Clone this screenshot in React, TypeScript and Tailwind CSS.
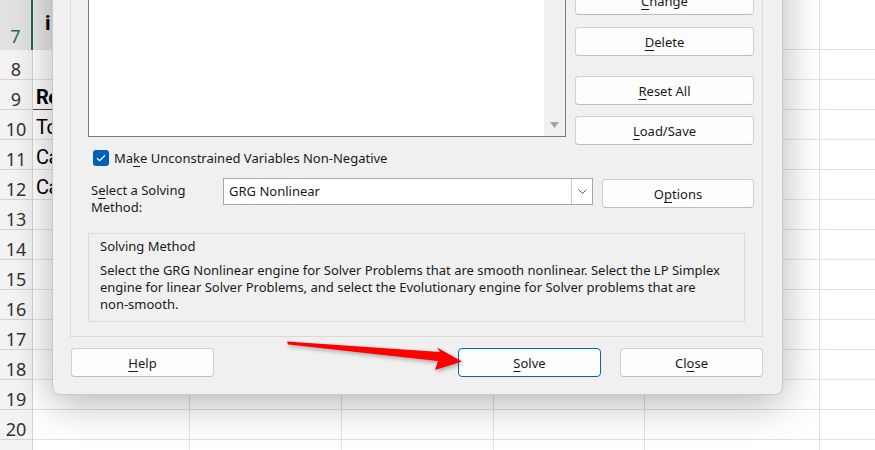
import React from "react";

const rows = [
  { n: "7", h: "h-[50px]", text: "i", bold: true, selected: true },
  { n: "8", h: "h-[30px]", text: "" },
  { n: "9", h: "h-[30px]", text: "Re", bold: true, underline: true },
  { n: "10", h: "h-[30px]", text: "To" },
  { n: "11", h: "h-[30px]", text: "Ca" },
  { n: "12", h: "h-[30px]", text: "Ca" },
  { n: "13", h: "h-[30px]", text: "" },
  { n: "14", h: "h-[30px]", text: "" },
  { n: "15", h: "h-[30px]", text: "" },
  { n: "16", h: "h-[30px]", text: "" },
  { n: "17", h: "h-[30px]", text: "" },
  { n: "18", h: "h-[30px]", text: "" },
  { n: "19", h: "h-[30px]", text: "" },
  { n: "20", h: "h-[30px]", text: "" },
  { n: "", h: "h-[30px]", text: "" }
];

function Sheet() {
  return (
    <div className="flex flex-col font-['Roboto',sans-serif]">
      {rows.map((r, i) => (
        <div key={i} className={`flex shrink-0 ${r.h}`}>
          <div
            className={
              r.selected
                ? "w-[33px] shrink-0 bg-[#e1e1e1] border-r-2 border-[#1e7145] flex items-end justify-center text-[18px] font-['Noto_Sans',sans-serif] text-[#1e7145]"
                : "w-[33px] shrink-0 bg-[#f3f3f3] border-r border-b border-[#d4d4d4] flex items-center justify-center pt-[9px] text-[18px] font-['Noto_Sans',sans-serif] text-[#333]"
            }
          >
            {r.n}
          </div>
          <div
            className={
              r.selected
                ? "w-[157px] shrink-0 bg-[#e8e8e8] border-r border-b border-[#e1e1e1] pl-[12px] pt-[8px] text-[21px] font-bold text-black"
                : r.underline
                ? "w-[157px] shrink-0 border-r border-b border-b-[#444] border-r-[#e1e1e1] pl-[3px] pt-[2px] text-[20px] font-bold tracking-[-0.5px] text-black"
                : "w-[157px] shrink-0 border-r border-b border-[#e1e1e1] pl-[3px] pt-[2px] text-[20px] tracking-[-0.5px] text-black"
            }
          >
            {r.text}
          </div>
          <div className="w-[152px] shrink-0 border-r border-b border-[#e1e1e1]" />
          <div className="w-[152px] shrink-0 border-r border-b border-[#e1e1e1]" />
          <div className="w-[151px] shrink-0 border-r border-b border-[#e1e1e1]" />
          <div className="w-[175px] shrink-0 border-r border-b border-[#e1e1e1]" />
          <div className="flex-1 border-b border-[#e1e1e1]" />
        </div>
      ))}
    </div>
  );
}

function Btn({
  children,
  className = "",
  primary = false
}: {
  children: React.ReactNode;
  className?: string;
  primary?: boolean;
}) {
  return (
    <div
      className={
        "h-[29px] shrink-0 flex items-center justify-center pt-[2px] rounded-[4px] bg-[#fdfdfd] text-[13px] text-[#1a1a1a] " +
        (primary
          ? "border border-[#0067c0]"
          : "border border-[#d0d0d0] border-b-[#bdbdbd]") +
        " " +
        className
      }
    >
      {children}
    </div>
  );
}

function U({ children }: { children: React.ReactNode }) {
  return <span className="underline underline-offset-[3px]">{children}</span>;
}

function Dialog() {
  return (
    <div className="absolute left-[52px] top-[-60px] w-[731px] h-[455px] bg-[#f0f0f0] rounded-b-[8px] border border-[#c9c9c9] shadow-[0_8px_40px_rgba(0,0,0,0.3)] flex flex-col pl-[17px] pr-[19px] font-['Noto_Sans',sans-serif] text-[13px] text-[#1a1a1a]">
      <div className="border border-t-0 border-[#dadada] flex flex-col pb-[14px]">
        <div className="flex items-start pl-[17px]">
          <div className="mt-[19px] w-[478px] h-[177px] bg-white border border-[#7a7a7a] flex justify-end">
            <div className="w-[21px] h-full bg-[#f0f0f0] flex flex-col justify-end items-center pb-[8px]">
              <svg width="9" height="6" viewBox="0 0 9 6">
                <polygon points="0,0 9,0 4.5,6" fill="#a3a3a3" />
              </svg>
            </div>
          </div>
          <div className="ml-[9px] mt-[45px] w-[179px] flex flex-col">
            <Btn>
              <U>C</U>hange
            </Btn>
            <Btn className="mt-[12px]">
              <U>D</U>elete
            </Btn>
            <Btn className="mt-[20px]">
              <U>R</U>eset All
            </Btn>
            <Btn className="mt-[11px]">
              <U>L</U>oad/Save
            </Btn>
          </div>
        </div>

        <div className="mt-[5px] flex items-center pl-[22px] h-[16px]">
          <div className="w-[16px] h-[16px] rounded-[3px] bg-[#005fb8] flex items-center justify-center">
            <svg width="10" height="8" viewBox="0 0 10 8">
              <path d="M1 4.2 L3.7 6.7 L9 1.3" stroke="white" strokeWidth="1.3" fill="none" />
            </svg>
          </div>
          <span className="ml-[5px] leading-[16px]">
            Ma<U>k</U>e Unconstrained Variables Non-Negative
          </span>
        </div>

        <div className="mt-[12px] h-[40px] flex items-start">
          <div className="w-[152px] shrink-0 pl-[20px] pt-[4px] leading-[17px]">
            S<U>e</U>lect a Solving
            <br />
            Method:
          </div>
          <div className="w-[370px] h-[27px] bg-white border border-[#a8a8a8] flex items-center">
            <span className="flex-1 pl-[5px] pt-[1px]">GRG Nonlinear</span>
            <div className="w-[21px] h-full border-l border-[#c8c8c8] flex items-center justify-center">
              <svg width="9" height="5" viewBox="0 0 9 5">
                <path d="M0.5 0.5 L4.5 4.5 L8.5 0.5" stroke="#5a5a5a" strokeWidth="1" fill="none" />
              </svg>
            </div>
          </div>
          <Btn className="ml-[9px] mt-[1px] w-[152px]">
            O<U>p</U>tions
          </Btn>
        </div>

        <div className="mt-[15px] ml-[17px] w-[657px] h-[89px] border border-[#dadada] pl-[11px] pt-[4px] leading-[17px]">
          <div>Solving Method</div>
          <div className="mt-[7px]">
            Select the GRG Nonlinear engine for Solver Problems that are smooth nonlinear. Select the LP Simplex
            <br />
            engine for linear Solver Problems, and select the Evolutionary engine for Solver problems that are
            <br />
            non-smooth.
          </div>
        </div>
      </div>

      <div className="mt-[11px] flex pl-[1px]">
        <Btn className="w-[143px]">
          <U>H</U>elp
        </Btn>
        <Btn primary className="ml-auto w-[143px]">
          <U>S</U>olve
        </Btn>
        <Btn className="ml-[19px] w-[143px]">
          Cl<U>o</U>se
        </Btn>
      </div>
    </div>
  );
}

function Arrow() {
  return (
    <svg
      className="absolute left-0 top-0 pointer-events-none"
      width="875"
      height="450"
      viewBox="0 0 875 450"
    >
      <polygon
        points="287,341.5 440,352 437,347.5 462,361.5 435,370 438,361 288,344.5"
        fill="#ff0000"
        style={{ filter: "drop-shadow(1px 2px 2px rgba(0,0,0,0.3))" }}
      />
    </svg>
  );
}

export default function App() {
  return (
    <div className="relative w-[875px] h-[450px] overflow-hidden bg-white">
      <Sheet />
      <Dialog />
      <Arrow />
    </div>
  );
}
